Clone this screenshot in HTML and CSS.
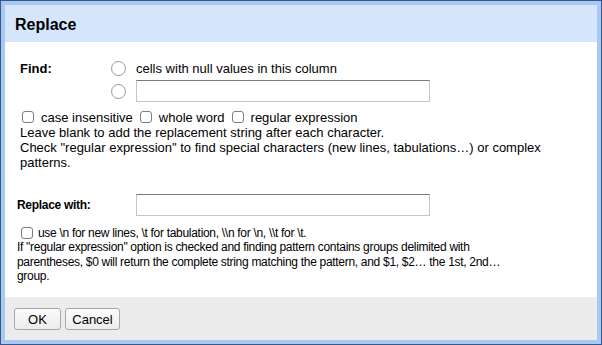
FILE: index.html
```
<!DOCTYPE html>
<html>
<head>
<meta charset="utf-8">
<link rel="stylesheet" href="styles.css">
</head>
<body>
<div class="dialog">
  <div class="frame">
    <div class="header">Replace</div>
    <div class="content">
      <div class="find-grid">
        <div class="label">Find:</div>
        <span class="radio"></span>
        <div class="opt-text">cells with null values in this column</div>
        <div></div>
        <span class="radio"></span>
        <div class="field"></div>
      </div>
      <div class="checks">
        <span class="check"></span><span class="ctext">case insensitive</span>
        <span class="check"></span><span class="ctext">whole word</span>
        <span class="check"></span><span class="ctext">regular expression</span>
      </div>
      <div class="note">Leave blank to add the replacement string after each character.</div>
      <div class="note">Check "regular expression" to find special characters (new lines, tabulations…) or complex patterns.</div>

      <div class="replace">
        <div class="replace-row">
          <div class="label narrow-label">Replace with:</div>
          <div class="field"></div>
        </div>
        <div class="escape-row">
          <span class="check small"></span><span>use \n for new lines, \t for tabulation, \\n for \n, \\t for \t.</span>
        </div>
        <div class="note2">If "regular expression" option is checked and finding pattern contains groups delimited with parentheses, $0 will return the complete string matching the pattern, and $1, $2… the 1st, 2nd… group.</div>
      </div>
    </div>
    <div class="footer">
      <button class="btn ok">OK</button>
      <button class="btn cancel">Cancel</button>
    </div>
  </div>
</div>
</body>
</html>
```
FILE: styles.css
```
html, body {
  margin: 0;
  padding: 0;
  background: #ffffff;
}
body {
  font-family: "Liberation Sans", Arial, sans-serif;
  font-size: 13px;
  color: #000;
}
.dialog {
  width: 602px;
  height: 345px;
  box-sizing: border-box;
  border: 1px solid #35598a;
}
.frame {
  height: 100%;
  box-sizing: border-box;
  border: 4px solid #a9c8f4;
  display: flex;
  flex-direction: column;
  background: #fff;
}
.header {
  height: 37px;
  flex: none;
  background: #d5e6fc;
  font-weight: bold;
  font-size: 16px;
  line-height: 37px;
  padding-left: 10px;
  box-sizing: border-box;
  padding-top: 1px;
}
.content {
  flex: 1;
  padding: 15px 0 0 15px;
  box-sizing: border-box;
}
.find-grid {
  display: grid;
  grid-template-columns: 91px 25px 294px;
  grid-template-rows: 22px 22px;
  row-gap: 1px;
  align-items: center;
}
.label {
  font-weight: bold;
}
.radio {
  width: 13px;
  height: 13px;
  border: 1px solid #9a9a9a;
  border-radius: 50%;
  background: #fff;
  display: block;
}
.field {
  height: 22px;
  box-sizing: border-box;
  border: 1px solid #c4c4c4;
  border-top-color: #7a7a7a;
  background: #fff;
  width: 294px;
}
.checks {
  margin-top: 7px;
  height: 16px;
  display: flex;
  align-items: center;
  padding-left: 2px;
}
.check {
  width: 10px;
  height: 10px;
  border: 1px solid #7c7c7c;
  border-radius: 3px;
  background: #fff;
  display: block;
  flex: none;
}
.ctext {
  margin: 0 7px 0 7px;
}
.note {
  line-height: 15px;
  width: 560px;
}
.replace {
  margin-top: 24px;
  margin-left: -3px;
  font-size: 12px;
  letter-spacing: -0.3px;
}
.replace-row {
  display: flex;
  align-items: center;
  height: 22px;
}
.narrow-label {
  width: 119px;
  flex: none;
}
.escape-row {
  margin-top: 9px;
  height: 15px;
  display: flex;
  align-items: center;
  padding-left: 4px;
}
.check.small {
  margin-right: 5px;
}
.note2 {
  line-height: 14.5px;
  width: 505px;
}
.footer {
  height: 43px;
  flex: none;
  background: #ececec;
  padding: 11px 0 0 9px;
  box-sizing: border-box;
  display: flex;
  align-items: flex-start;
  gap: 4px;
}
.btn {
  font-family: "Liberation Sans", Arial, sans-serif;
  font-size: 13px;
  color: #000;
  height: 22px;
  border: 1px solid #a8a8a8;
  border-radius: 3px;
  background: linear-gradient(#fbfbfb, #ececec);
  padding: 0;
  margin: 0;
}
.ok { width: 47px; }
.cancel { width: 55px; }
```
